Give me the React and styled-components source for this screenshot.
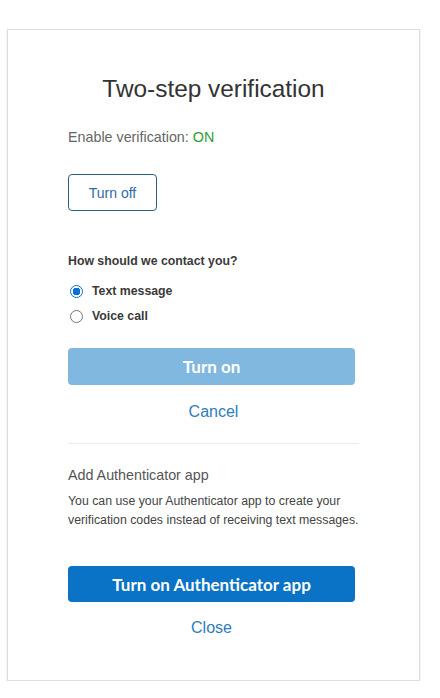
import styled, { createGlobalStyle } from "styled-components"

const GlobalStyle = createGlobalStyle`
  body {
    margin: 0;
    background: #fff;
    font-family: "Liberation Sans", Arial, sans-serif;
  }
`

const Card = styled.div`
  box-sizing: border-box;
  width: 413px;
  margin: 29px 0 0 7px;
  padding: 45px 60px 42px 60px;
  border: 1px solid #dedede;
  box-shadow: 0 1px 2px rgba(0, 0, 0, 0.12);
  display: flex;
  flex-direction: column;
`

const Title = styled.h1`
  margin: 0;
  font-size: 24.4px;
  font-weight: 400;
  line-height: 28px;
  color: #333;
  text-align: center;
`

const Status = styled.p`
  margin: 24px 0 0;
  font-size: 14.3px;
  line-height: 20px;
  color: #666;
`

const On = styled.span`
  color: #2e9e34;
`

const OutlineButton = styled.button`
  align-self: flex-start;
  margin-top: 27px;
  width: 89px;
  height: 37px;
  border: 1px solid #2b5f88;
  border-radius: 4px;
  background: #fff;
  color: #2d6ca6;
  font-family: "Liberation Sans", Arial, sans-serif;
  font-size: 14px;
  cursor: pointer;
`

const Question = styled.p`
  margin: 42px 0 0;
  font-size: 12.3px;
  font-weight: 700;
  line-height: 16px;
  color: #3a3a3a;
`

const Options = styled.div`
  display: flex;
  flex-direction: column;
  gap: 5px;
  margin-top: 12px;
`

const Option = styled.label`
  display: flex;
  align-items: center;
  gap: 9px;
  height: 20px;
  padding-left: 2px;
  font-size: 12.3px;
  font-weight: 700;
  color: #3a3a3a;
  cursor: pointer;
`

const Radio = styled.input`
  appearance: none;
  box-sizing: border-box;
  margin: 0;
  width: 13px;
  height: 13px;
  border-radius: 50%;
  border: 1px solid #767676;
  background: #fff;

  &:checked {
    border: 1px solid #0b6fd8;
    background: radial-gradient(circle, #0b6fd8 0 3.6px, #fff 4px);
  }
`

const PrimaryButton = styled.button`
  margin-top: ${(p) => p.$top}px;
  width: 287px;
  height: ${(p) => p.$height}px;
  border: none;
  border-radius: 4px;
  background: ${(p) => (p.disabled ? "#80b8e0" : "#0a73c5")};
  color: #fff;
  font-family: Lato, "Open Sans", sans-serif;
  font-size: 17px;
  font-weight: 700;
  cursor: ${(p) => (p.disabled ? "default" : "pointer")};
`

const LinkButton = styled.button`
  align-self: center;
  margin-top: ${(p) => p.$top}px;
  margin-right: ${(p) => p.$shift || 0}px;
  padding: 0;
  border: none;
  background: none;
  color: #2e7dbc;
  font-family: "Liberation Sans", Arial, sans-serif;
  font-size: 16px;
  line-height: 20px;
  cursor: pointer;
`

const Divider = styled.hr`
  margin: 21px 0 0;
  border: none;
  border-top: 1px solid #ececec;
`

const SectionTitle = styled.h2`
  margin: 21px 0 0;
  font-size: 14.3px;
  font-weight: 400;
  line-height: 20px;
  color: #555;
`

const Help = styled.p`
  margin: 7px 0 0;
  font-size: 12.3px;
  line-height: 18.5px;
  color: #444;
`

export default function App() {
  return (
    <>
      <GlobalStyle />
      <Card>
        <Title>Two-step verification</Title>
        <Status>
          Enable verification: <On>ON</On>
        </Status>
        <OutlineButton>Turn off</OutlineButton>

        <Question>How should we contact you?</Question>
        <Options>
          <Option>
            <Radio type="radio" name="contact" defaultChecked />
            Text message
          </Option>
          <Option>
            <Radio type="radio" name="contact" />
            Voice call
          </Option>
        </Options>

        <PrimaryButton disabled $top={22} $height={37}>
          Turn on
        </PrimaryButton>
        <LinkButton $top={17}>Cancel</LinkButton>

        <Divider />

        <SectionTitle>Add Authenticator app</SectionTitle>
        <Help>
          You can use your Authenticator app to create your verification codes instead of receiving
          text messages.
        </Help>

        <PrimaryButton $top={37} $height={36}>
          Turn on Authenticator app
        </PrimaryButton>
        <LinkButton $top={16} $shift={4}>
          Close
        </LinkButton>
      </Card>
    </>
  )
}
